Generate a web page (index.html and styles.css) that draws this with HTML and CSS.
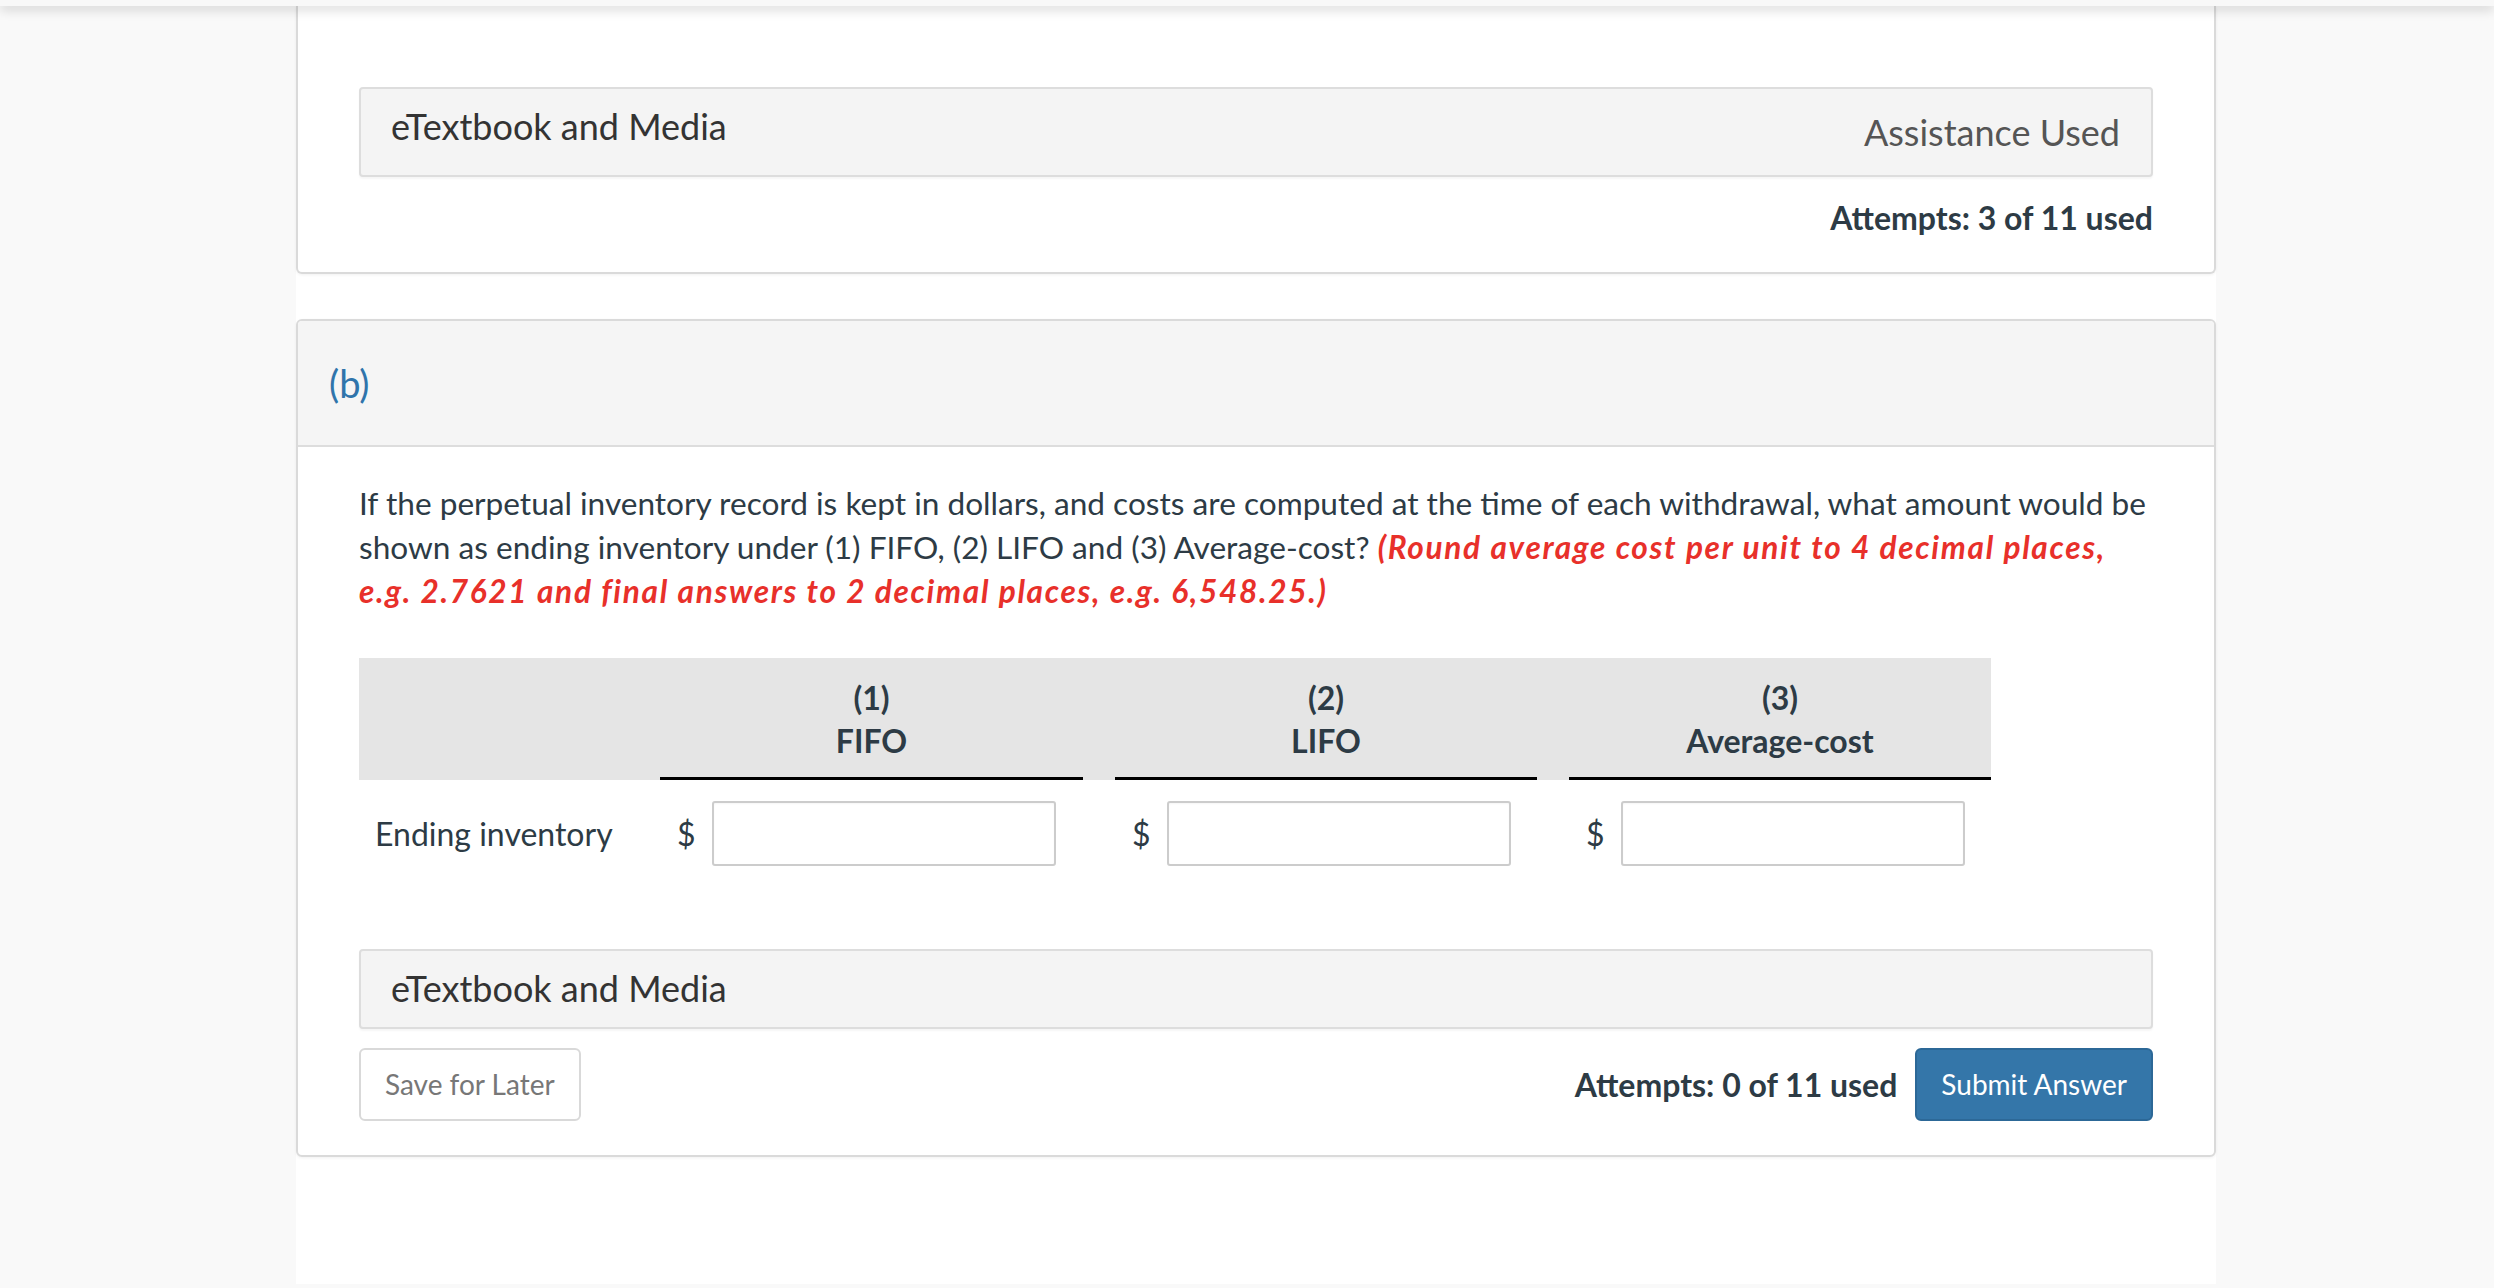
FILE: index.html
```html
<!DOCTYPE html>
<html lang="en">
<head>
<meta charset="utf-8">
<title>Question part (b)</title>
<link rel="stylesheet" href="styles.css">
</head>
<body>
<div class="topbar"></div>
<main class="column">
  <section class="card card-first">
    <div class="media-box">
      <span class="media-title">eTextbook and Media</span>
      <span class="assist">Assistance Used</span>
    </div>
    <div class="attempts-row">
      <span class="attempts">Attempts: 3 of 11 used</span>
    </div>
  </section>

  <section class="card card-second">
    <header class="part-header">
      <span class="part-label">(b)</span>
    </header>
    <div class="part-body">
      <p class="question">If the perpetual inventory record is kept in dollars, and costs are computed at the time of each withdrawal, what amount would be shown as ending inventory under (1) FIFO, (2) LIFO and (3) Average-cost? <em class="hint">(Round average cost per unit to 4 decimal places, e.g. 2.7621 and final answers to 2 decimal places, e.g. 6,548.25.)</em></p>

      <div class="answer-table">
        <div class="table-head">
          <div class="th th-label"></div>
          <div class="th">(1)<br>FIFO</div>
          <div class="th">(2)<br>LIFO</div>
          <div class="th">(3)<br>Average-cost</div>
        </div>
        <div class="table-row">
          <div class="td td-label">Ending inventory</div>
          <div class="td td-input"><span class="currency">$</span><input class="amount" type="text"></div>
          <div class="td td-input"><span class="currency">$</span><input class="amount" type="text"></div>
          <div class="td td-input"><span class="currency">$</span><input class="amount" type="text"></div>
        </div>
      </div>

      <div class="media-box media-box-short">
        <span class="media-title">eTextbook and Media</span>
      </div>

      <div class="actions">
        <button class="btn btn-save" type="button">Save for Later</button>
        <div class="actions-right">
          <span class="attempts">Attempts: 0 of 11 used</span>
          <button class="btn btn-submit" type="button">Submit Answer</button>
        </div>
      </div>
    </div>
  </section>
</main>
</body>
</html>
```
FILE: styles.css
```css
* { box-sizing: border-box; }

html, body {
  margin: 0;
  padding: 0;
}

body {
  background: #f9f9f9;
  font-family: Lato, "Open Sans", "Liberation Sans", sans-serif;
  color: #2d3b45;
  height: 1288px;
  overflow: hidden;
}

.topbar {
  height: 6px;
  background: #f8f8f8;
  position: relative;
  z-index: 2;
  box-shadow: 0 3px 12px rgba(0, 0, 0, 0.22);
}

.column {
  margin-left: 296px;
  width: 1920px;
  height: 1278px;
  background: #ffffff;
}

.card {
  border: 2px solid #dadada;
  border-radius: 6px;
  background: #fff;
  box-shadow: 0 1px 3px rgba(0, 0, 0, 0.06);
}

.card-first {
  border-top: none;
  border-radius: 0 0 6px 6px;
  padding: 81px 61px 35px;
}

.media-box {
  display: flex;
  justify-content: space-between;
  align-items: flex-start;
  background: #f4f4f4;
  border: 2px solid #dddddd;
  border-radius: 4px;
  box-shadow: 0 2px 2px rgba(0, 0, 0, 0.04);
  padding: 15.5px 31px 17.3px 30px;
  font-size: 36px;
  line-height: 1.2;
}

.media-title {
  color: #333333;
}

.assist {
  color: #555555;
  padding-top: 6px;
  padding-bottom: 4px;
}

.attempts-row {
  display: flex;
  justify-content: flex-end;
  margin-top: 22px;
}

.attempts {
  font-size: 32px;
  font-weight: 700;
  line-height: 1.2;
  color: #2d3b45;
}

.card-second {
  margin-top: 45px;
}

.part-header {
  height: 126px;
  background: #f5f5f5;
  border-bottom: 2px solid #dddddd;
  border-radius: 4px 4px 0 0;
  display: flex;
  align-items: center;
  padding-left: 31px;
}

.part-label {
  font-size: 38px;
  color: #2f74ab;
  line-height: 1.2;
}

.part-body {
  padding: 34px 61px 34px;
}

.question {
  margin: 0;
  font-size: 31.6px;
  line-height: 44px;
  color: #2d3b45;
}

.hint {
  color: #e8302a;
  font-weight: 700;
  font-style: italic;
  letter-spacing: 1.68px;
}

.answer-table {
  margin-top: 45px;
  width: 1632px;
}

.table-head,
.table-row {
  display: grid;
  grid-template-columns: 269px 423px 422px 422px;
  column-gap: 32px;
}

.table-head {
  background: #e5e5e5;
}

.th {
  padding: 18px 0 15px;
  font-size: 32px;
  line-height: 43px;
  font-weight: 700;
  text-align: center;
  color: #2d3b45;
  border-bottom: 3px solid #000000;
}

.th-label {
  border-bottom: none;
}

.table-row {
  padding-top: 21px;
  align-items: center;
}

.td {
  font-size: 32px;
  line-height: 38px;
  color: #2d3b45;
}

.td-label {
  padding-left: 16px;
}

.td-input {
  display: flex;
  align-items: center;
  padding-left: 17px;
}

.currency {
  width: 17px;
  margin-right: 18px;
}

.amount {
  width: 344px;
  height: 65px;
  border: 2px solid #cccccc;
  border-radius: 3px;
  background: #fff;
  box-shadow: inset 0 1px 2px rgba(0, 0, 0, 0.04);
  font-family: inherit;
  font-size: 28px;
  padding: 0 12px;
  outline: none;
}

.media-box-short {
  margin-top: 83px;
}

.actions {
  margin-top: 19px;
  display: flex;
  justify-content: space-between;
  align-items: center;
}

.actions-right {
  display: flex;
  align-items: center;
  gap: 18px;
}

.btn {
  height: 73px;
  border-radius: 6px;
  font-family: inherit;
  font-size: 28px;
  line-height: 1.2;
  padding: 0 24px;
  cursor: pointer;
}

.btn-save {
  background: #ffffff;
  border: 2px solid #d9d9d9;
  color: #777777;
}

.btn-submit {
  background: #3476a9;
  border: 2px solid #2c6897;
  color: #ffffff;
}
```
